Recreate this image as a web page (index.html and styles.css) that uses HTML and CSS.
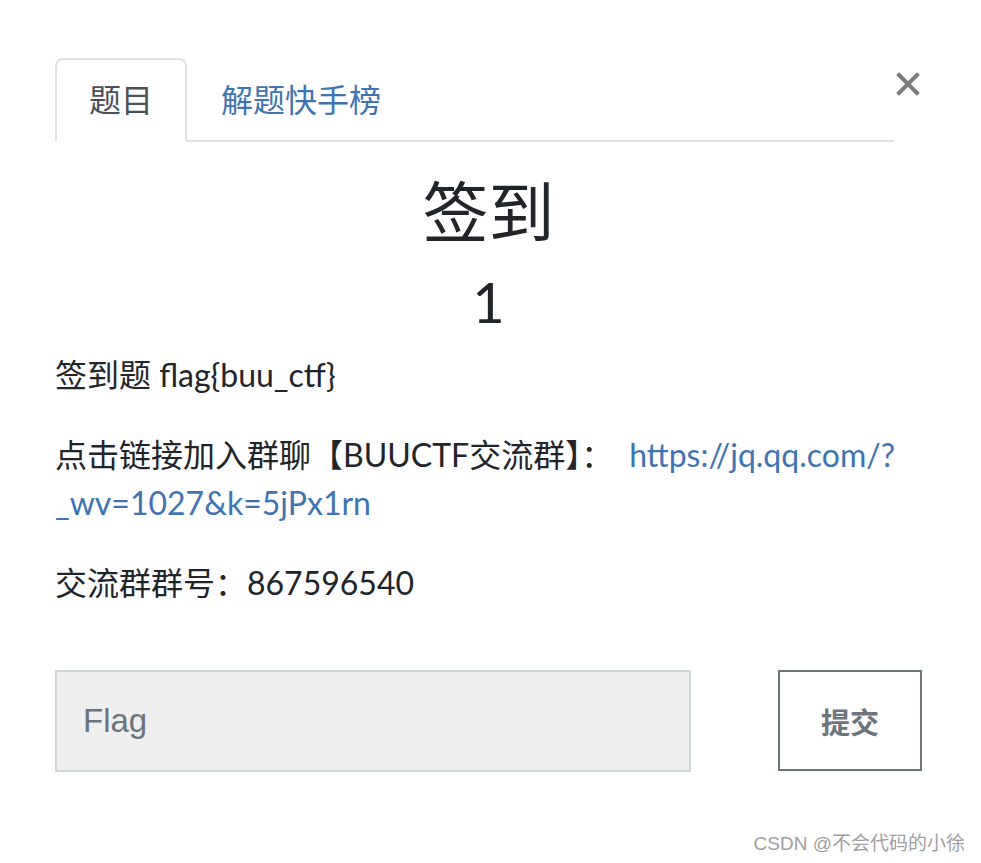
FILE: index.html
```html
<!DOCTYPE html>
<html lang="zh">
<head>
<meta charset="utf-8">
<title>签到</title>
<link rel="stylesheet" href="styles.css">
</head>
<body>
<div class="modal">
  <div class="modal-header">
    <ul class="nav-tabs">
      <li class="tab active">题目</li>
      <li class="tab">解题快手榜</li>
    </ul>
    <button class="close" aria-label="Close">
      <svg width="24" height="24" viewBox="0 0 24 24"><path d="M3 3 L21 21 M21 3 L3 21" stroke="#7b7b7b" stroke-width="4" stroke-linecap="square" fill="none"/></svg>
    </button>
  </div>
  <div class="modal-body">
    <h2 class="title">签到</h2>
    <h3 class="value">1</h3>
    <div class="desc">
      <p>签到题 flag{buu_ctf}</p>
      <p>点击链接加入群聊【BUUCTF交流群】：<a href="#">https://jq.qq.com/?_wv=1027&amp;k=5jPx1rn</a></p>
      <p>交流群群号：867596540</p>
    </div>
    <form class="submit-row">
      <input class="flag-input" type="text" placeholder="Flag">
      <button class="btn-submit" type="button">提交</button>
    </form>
  </div>
</div>
<div class="watermark">CSDN @不会代码的小徐</div>
</body>
</html>
```
FILE: styles.css
```css
html, body {
  margin: 0;
  padding: 0;
  background: #fff;
}
body {
  font-family: "Lato", "Noto Sans CJK SC", sans-serif;
  color: #212529;
  width: 981px;
  height: 863px;
  position: relative;
  overflow: hidden;
}
.modal {
  padding: 58px 59px 0 55px;
}
.modal-header {
  display: flex;
  align-items: flex-start;
}
.nav-tabs {
  list-style: none;
  margin: 0;
  padding: 0;
  display: flex;
  flex: 1;
  border-bottom: 2px solid #dee2e6;
}
.tab {
  font-size: 32px;
  line-height: 48px;
  padding: 16px 32px;
  border: 2px solid transparent;
  border-radius: 8px 8px 0 0;
  margin-bottom: -2px;
  color: #3f74b2;
}
.tab.active {
  color: #495057;
  border-color: #dee2e6 #dee2e6 #fff;
  background: #fff;
}
.close {
  background: none;
  border: 0;
  padding: 0;
  margin: 11px 0 0 0;
  width: 28px;
  height: 30px;
  display: flex;
  align-items: center;
  justify-content: center;
}
.modal-body {
  padding-top: 31px;
}
.title {
  margin: 0;
  font-size: 66px;
  line-height: 77px;
  font-weight: 400;
  text-align: center;
}
.value {
  margin: 18px 0 0;
  font-size: 56px;
  line-height: 67px;
  font-weight: 400;
  text-align: center;
}
.desc {
  margin-top: 16px;
}
.desc p {
  margin: 0 0 32px;
  font-size: 32px;
  line-height: 48px;
}
.desc a {
  color: #3f74b2;
  text-decoration: none;
  margin-left: 16px;
}
.submit-row {
  display: flex;
  justify-content: space-between;
  margin-top: 63px;
}
.flag-input {
  box-sizing: border-box;
  width: 636px;
  height: 102px;
  border: 2px solid #ced4da;
  background: #efefef;
  padding: 0 26px;
  font-family: "Liberation Sans", Arial, sans-serif;
  font-size: 33px;
  color: #495057;
  outline: none;
}
.flag-input::placeholder {
  color: #6c757d;
}
.btn-submit {
  box-sizing: border-box;
  width: 144px;
  height: 101px;
  border: 2px solid #6c757d;
  background: #fff;
  color: #6c757d;
  font-family: "Noto Sans CJK SC", sans-serif;
  font-weight: 700;
  font-size: 29px;
  padding: 0;
}
.watermark {
  position: absolute;
  right: 16px;
  bottom: 8px;
  font-family: "Liberation Sans", "Noto Sans CJK SC", sans-serif;
  font-size: 19px;
  color: #a0a0a0;
}
```
